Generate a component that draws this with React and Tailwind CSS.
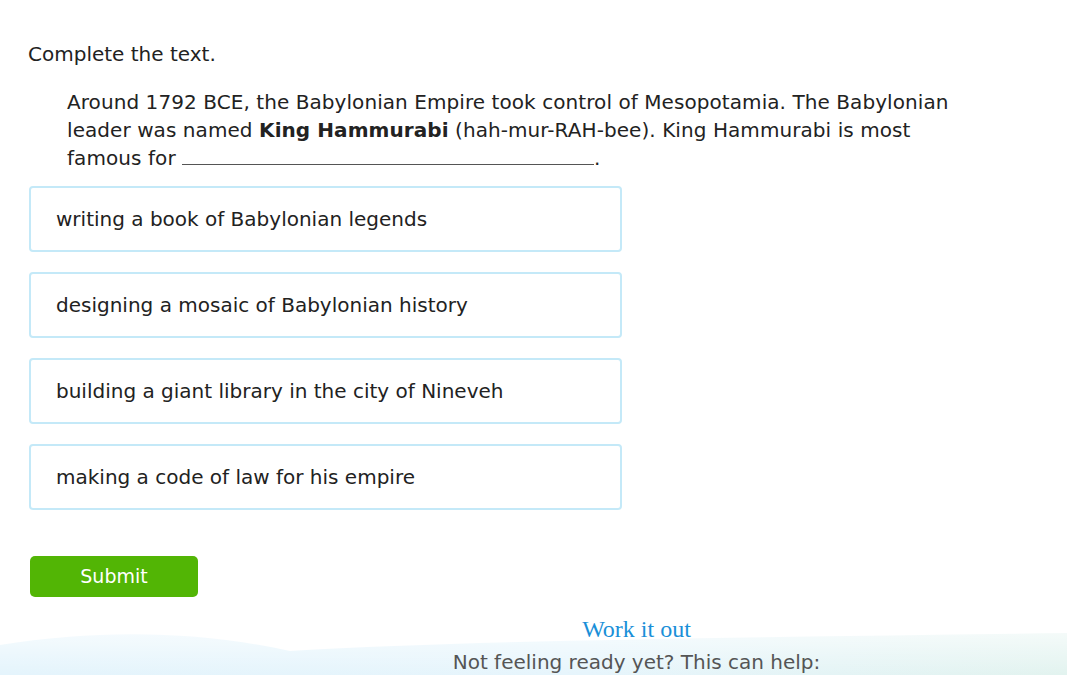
import React from 'react';

const choices = [
  'writing a book of Babylonian legends',
  'designing a mosaic of Babylonian history',
  'building a giant library in the city of Nineveh',
  'making a code of law for his empire',
];

export default function App() {
  return (
    <div className="relative w-[1067px] h-[675px] overflow-hidden bg-white text-[#222]" style={{ fontFamily: '"DejaVu Sans", Verdana, sans-serif' }}>
      {/* background wave */}
      <svg className="absolute left-0 bottom-0" width="1067" height="60" viewBox="0 0 1067 60" preserveAspectRatio="none">
        <defs>
          <linearGradient id="wv" x1="0" y1="0" x2="1" y2="0">
            <stop offset="0" stopColor="#e4f4fc" />
            <stop offset="0.55" stopColor="#e6f5fc" />
            <stop offset="1" stopColor="#e2f3ef" />
          </linearGradient>
          <linearGradient id="fade" x1="0" y1="0" x2="0" y2="1">
            <stop offset="0" stopColor="#ffffff" stopOpacity="0.9" />
            <stop offset="1" stopColor="#ffffff" stopOpacity="0" />
          </linearGradient>
        </defs>
        <path d="M0 30 C 100 14, 200 16, 290 36 C 500 24, 800 22, 1067 18 L 1067 60 L 0 60 Z" fill="url(#wv)" />
        <rect x="0" y="0" width="1067" height="60" fill="url(#fade)" />
      </svg>

      <div className="relative pt-[40px] pl-[28px]">
        <div className="text-[20px] leading-[28px]">Complete the text.</div>

        <p className="mt-[20px] ml-[39px] w-[890px] text-[20px] leading-[28px] tracking-[0.07px]">
          Around 1792 BCE, the Babylonian Empire took control of Mesopotamia. The Babylonian leader was named{' '}
          <b>King Hammurabi</b> (hah-mur-RAH-bee). King Hammurabi is most famous for{' '}
          <span className="inline-block w-[412px] border-b border-[#555] align-baseline"></span>.
        </p>

        <div className="mt-[14px] flex flex-col gap-[20px] w-[593px] ml-[1px]">
          {choices.map((c) => (
            <div key={c} className="h-[66px] flex items-center pl-[25px] border-2 border-[#c4e9f8] rounded-[4px] text-[20px]">
              {c}
            </div>
          ))}
        </div>

        <button className="mt-[46px] ml-[2px] w-[168px] h-[41px] rounded-[5px] bg-[#52b505] text-white text-[19px]">
          Submit
        </button>
      </div>

      <div className="relative mt-[17px] flex flex-col items-center pl-[206px]">
        <div className="text-[24px] leading-[30px] text-[#1a8fd8]" style={{ fontFamily: '"Liberation Serif", serif' }}>Work it out</div>
        <div className="mt-[4px] text-[20px] leading-[28px] text-[#555]">Not feeling ready yet? This can help:</div>
      </div>
    </div>
  );
}
